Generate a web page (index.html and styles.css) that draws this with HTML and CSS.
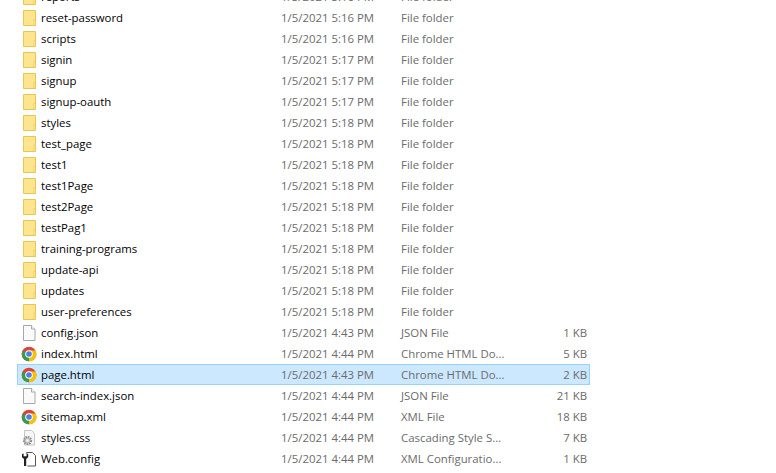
FILE: index.html
```html
<!DOCTYPE html>
<html lang="en">
<head>
<meta charset="utf-8">
<title>Files</title>
<link rel="stylesheet" href="styles.css">
</head>
<body>
<svg class="defs" width="0" height="0" aria-hidden="true">
  <symbol id="folder" viewBox="0 0 16 16">
    <path d="M2.500.5h12v15h-12z" fill="#fde58f" stroke="#eac64c"/>
    <path d="M13 9.500h1.500v6H13z" fill="#fff3c2" stroke="#eac64c" stroke-width=".8"/>
  </symbol>
  <symbol id="file" viewBox="0 0 16 16">
    <path d="M2.500.5h8l3.500 3.500v11.500H2.500z" fill="#fafafa" stroke="#a8a8a8"/>
    <path d="M10.500.5V4H14" fill="#fff" stroke="#a8a8a8"/>
  </symbol>
  <symbol id="chrome" viewBox="0 0 16 16">
    <circle cx="8" cy="8" r="7.300" fill="#db4437"/>
    <path d="M8 8 1.700 4.400A7.300 7.300 0 0 0 8 15.300z" fill="#3c9a4f"/>
    <path d="M8 4.400h6.600A7.300 7.300 0 0 1 8 15.300z" fill="#f4c20d"/>
    <circle cx="8" cy="8" r="3.800" fill="#fff"/>
    <circle cx="8" cy="8" r="2.800" fill="#4a80e8"/>
  </symbol>
  <symbol id="css" viewBox="0 0 16 16">
    <path d="M3.500.5h7l3 3v11.500h-10z" fill="#f6f6f6" stroke="#c4c4c4"/>
    <circle cx="6.500" cy="10.500" r="3.600" fill="none" stroke="#8f8f8f" stroke-width="2" stroke-dasharray="1.600 .8"/>
    <circle cx="6.500" cy="10.500" r="2.600" fill="#d8d8d8" stroke="#9a9a9a" stroke-width=".7"/>
    <circle cx="6.500" cy="10.500" r="1" fill="#fff"/>
  </symbol>
  <symbol id="config" viewBox="0 0 16 16">
    <path d="M5.500 2.500v-1h6l3 3v10.500h-8" fill="#fff" stroke="#555"/>
    <path d="M1 3v3.200L3 8v7h2.200V8l2-1.800V3L5.600 2.500v2.700H2.600V2.500z" fill="#222"/>
  </symbol>
</svg>
<main class="list">
  <div class="row"><svg class="icon"><use href="#folder"/></svg><span class="name">reports</span><span class="date">1/5/2021 5:16 PM</span><span class="type">File folder</span><span class="size"></span></div>
  <div class="row"><svg class="icon"><use href="#folder"/></svg><span class="name">reset-password</span><span class="date">1/5/2021 5:16 PM</span><span class="type">File folder</span><span class="size"></span></div>
  <div class="row"><svg class="icon"><use href="#folder"/></svg><span class="name">scripts</span><span class="date">1/5/2021 5:16 PM</span><span class="type">File folder</span><span class="size"></span></div>
  <div class="row"><svg class="icon"><use href="#folder"/></svg><span class="name">signin</span><span class="date">1/5/2021 5:17 PM</span><span class="type">File folder</span><span class="size"></span></div>
  <div class="row"><svg class="icon"><use href="#folder"/></svg><span class="name">signup</span><span class="date">1/5/2021 5:17 PM</span><span class="type">File folder</span><span class="size"></span></div>
  <div class="row"><svg class="icon"><use href="#folder"/></svg><span class="name">signup-oauth</span><span class="date">1/5/2021 5:17 PM</span><span class="type">File folder</span><span class="size"></span></div>
  <div class="row"><svg class="icon"><use href="#folder"/></svg><span class="name">styles</span><span class="date">1/5/2021 5:18 PM</span><span class="type">File folder</span><span class="size"></span></div>
  <div class="row"><svg class="icon"><use href="#folder"/></svg><span class="name">test_page</span><span class="date">1/5/2021 5:18 PM</span><span class="type">File folder</span><span class="size"></span></div>
  <div class="row"><svg class="icon"><use href="#folder"/></svg><span class="name">test1</span><span class="date">1/5/2021 5:18 PM</span><span class="type">File folder</span><span class="size"></span></div>
  <div class="row"><svg class="icon"><use href="#folder"/></svg><span class="name">test1Page</span><span class="date">1/5/2021 5:18 PM</span><span class="type">File folder</span><span class="size"></span></div>
  <div class="row"><svg class="icon"><use href="#folder"/></svg><span class="name">test2Page</span><span class="date">1/5/2021 5:18 PM</span><span class="type">File folder</span><span class="size"></span></div>
  <div class="row"><svg class="icon"><use href="#folder"/></svg><span class="name">testPag1</span><span class="date">1/5/2021 5:18 PM</span><span class="type">File folder</span><span class="size"></span></div>
  <div class="row"><svg class="icon"><use href="#folder"/></svg><span class="name">training-programs</span><span class="date">1/5/2021 5:18 PM</span><span class="type">File folder</span><span class="size"></span></div>
  <div class="row"><svg class="icon"><use href="#folder"/></svg><span class="name">update-api</span><span class="date">1/5/2021 5:18 PM</span><span class="type">File folder</span><span class="size"></span></div>
  <div class="row"><svg class="icon"><use href="#folder"/></svg><span class="name">updates</span><span class="date">1/5/2021 5:18 PM</span><span class="type">File folder</span><span class="size"></span></div>
  <div class="row"><svg class="icon"><use href="#folder"/></svg><span class="name">user-preferences</span><span class="date">1/5/2021 5:18 PM</span><span class="type">File folder</span><span class="size"></span></div>
  <div class="row"><svg class="icon"><use href="#file"/></svg><span class="name">config.json</span><span class="date">1/5/2021 4:43 PM</span><span class="type">JSON File</span><span class="size">1 KB</span></div>
  <div class="row"><svg class="icon"><use href="#chrome"/></svg><span class="name">index.html</span><span class="date">1/5/2021 4:44 PM</span><span class="type">Chrome HTML Do...</span><span class="size">5 KB</span></div>
  <div class="row selected"><svg class="icon"><use href="#chrome"/></svg><span class="name">page.html</span><span class="date">1/5/2021 4:43 PM</span><span class="type">Chrome HTML Do...</span><span class="size">2 KB</span></div>
  <div class="row"><svg class="icon"><use href="#file"/></svg><span class="name">search-index.json</span><span class="date">1/5/2021 4:44 PM</span><span class="type">JSON File</span><span class="size">21 KB</span></div>
  <div class="row"><svg class="icon"><use href="#chrome"/></svg><span class="name">sitemap.xml</span><span class="date">1/5/2021 4:44 PM</span><span class="type">XML File</span><span class="size">18 KB</span></div>
  <div class="row"><svg class="icon"><use href="#css"/></svg><span class="name">styles.css</span><span class="date">1/5/2021 4:44 PM</span><span class="type">Cascading Style S...</span><span class="size">7 KB</span></div>
  <div class="row"><svg class="icon"><use href="#config"/></svg><span class="name">Web.config</span><span class="date">1/5/2021 4:44 PM</span><span class="type">XML Configuratio...</span><span class="size">1 KB</span></div>
</main>
</body>
</html>
```

FILE: styles.css
```css
html, body {
  margin: 0;
  height: 100%;
  overflow: hidden;
  background: #fff;
}
.defs {
  display: block;
  height: 0;
}
.list {
  margin: -14px 0 0 17px;
  width: 573px;
  font: 11.4px/21px "Open Sans", "Noto Sans", sans-serif;
  color: #6b6b6b;
}
.row {
  display: grid;
  grid-template-columns: 16px 244px 120px 1fr 60px;
  align-items: center;
  height: 21px;
  padding: 0 3px 0 4px;
  box-sizing: border-box;
}
.selected {
  background: #cce8ff;
  box-shadow: inset 0 0 0 1px #99d1ff;
}
.icon {
  width: 16px;
  height: 16px;
  display: block;
}
.name {
  color: #000;
  padding-left: 4px;
  white-space: nowrap;
}
.date, .type {
  white-space: nowrap;
}
.size {
  text-align: right;
}
```
